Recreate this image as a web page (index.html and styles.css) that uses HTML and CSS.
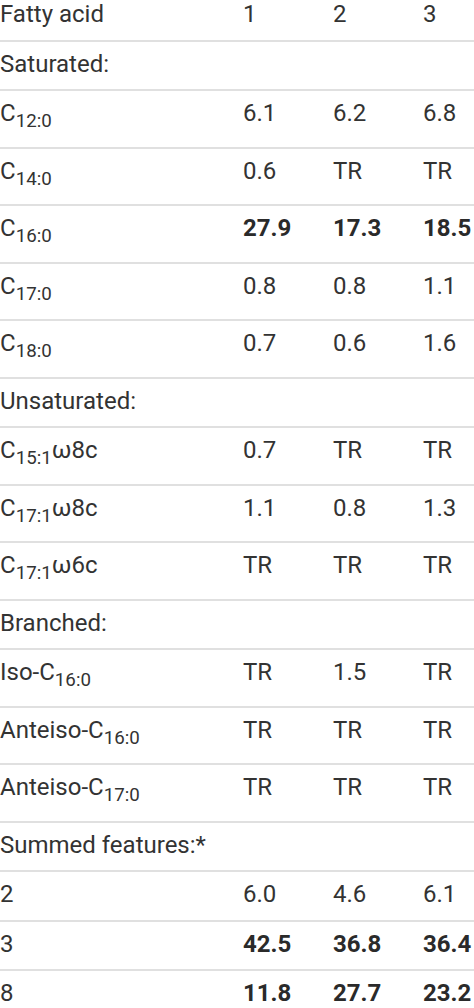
FILE: index.html
```html
<!DOCTYPE html>
<html lang="en">
<head>
  <meta charset="UTF-8" />
  <meta name="viewport" content="width=device-width, initial-scale=1.0"/>
  <title>Fatty acid composition</title>
  <link rel="stylesheet" href="styles.css">
</head>
<body>
  <table class="fa-table">
    <thead>
      <tr>
        <th>Fatty acid</th>
        <th>1</th>
        <th>2</th>
        <th>3</th>
      </tr>
    </thead>
    <tbody>
      <tr class="group"><td colspan="4">Saturated:</td></tr>
      <tr><td>C<sub>12:0</sub></td><td>6.1</td><td>6.2</td><td>6.8</td></tr>
      <tr><td>C<sub>14:0</sub></td><td>0.6</td><td>TR</td><td>TR</td></tr>
      <tr><td>C<sub>16:0</sub></td><td><b>27.9</b></td><td><b>17.3</b></td><td><b>18.5</b></td></tr>
      <tr><td>C<sub>17:0</sub></td><td>0.8</td><td>0.8</td><td>1.1</td></tr>
      <tr><td>C<sub>18:0</sub></td><td>0.7</td><td>0.6</td><td>1.6</td></tr>
      <tr class="group"><td colspan="4">Unsaturated:</td></tr>
      <tr><td>C<sub>15:1</sub>ω8c</td><td>0.7</td><td>TR</td><td>TR</td></tr>
      <tr><td>C<sub>17:1</sub>ω8c</td><td>1.1</td><td>0.8</td><td>1.3</td></tr>
      <tr><td>C<sub>17:1</sub>ω6c</td><td>TR</td><td>TR</td><td>TR</td></tr>
      <tr class="group"><td colspan="4">Branched:</td></tr>
      <tr><td>Iso-C<sub>16:0</sub></td><td>TR</td><td>1.5</td><td>TR</td></tr>
      <tr><td>Anteiso-C<sub>16:0</sub></td><td>TR</td><td>TR</td><td>TR</td></tr>
      <tr><td>Anteiso-C<sub>17:0</sub></td><td>TR</td><td>TR</td><td>TR</td></tr>
      <tr class="group"><td colspan="4">Summed features:*</td></tr>
      <tr><td>2</td><td>6.0</td><td>4.6</td><td>6.1</td></tr>
      <tr><td>3</td><td><b>42.5</b></td><td><b>36.8</b></td><td><b>36.4</b></td></tr>
      <tr><td>8</td><td><b>11.8</b></td><td><b>27.7</b></td><td><b>23.2</b></td></tr>
    </tbody>
  </table>
</body>
</html>
```
FILE: styles.css
```css
html, body {
  margin: 0;
  padding: 0;
  background: #fff;
  overflow: hidden;
}
body {
  font-family: Roboto, 'Noto Sans', sans-serif;
  font-size: 24px;
  line-height: 28.5px;
  color: #333;
}
.fa-table {
  border-collapse: collapse;
  table-layout: fixed;
  width: 512px;
}
.fa-table th,
.fa-table td {
  text-align: left;
  font-weight: 400;
  padding: 8px 0 11px 0;
  border-bottom: 2px solid #e0e0e0;
  white-space: nowrap;
  vertical-align: top;
}
.fa-table th {
  padding-top: 0;
}
.fa-table th:first-child,
.fa-table td:first-child {
  width: 243px;
}
.fa-table th:nth-child(2),
.fa-table th:nth-child(3) {
  width: 90px;
}
.fa-table b {
  font-weight: 700;
  color: #2a2a2a;
}
.fa-table sub {
  font-size: 0.78em;
  vertical-align: -6px;
}
```
